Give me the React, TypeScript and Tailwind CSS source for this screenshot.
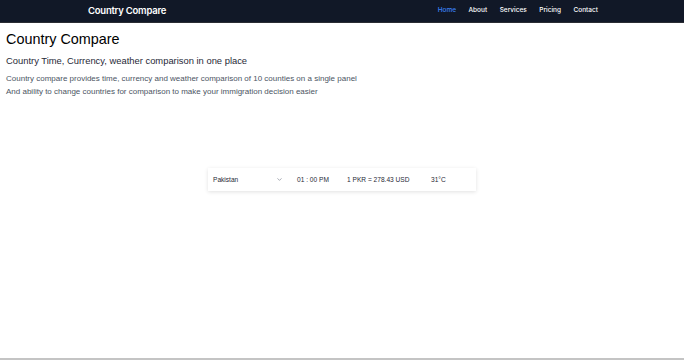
import React from 'react';

const links = ['Home', 'About', 'Services', 'Pricing', 'Contact'];

const Navbar: React.FC = () => (
  <nav className="h-[23px] bg-[#111827] border-b border-[#2a2d33] flex items-center font-['Inter',sans-serif]">
    <div className="w-full flex items-center justify-between pl-[88px] pr-[86px]">
      <span className="text-white text-[9.5px] font-semibold tracking-tight">Country Compare</span>
      <ul className="flex items-center gap-[12.5px] text-[6.5px] font-medium">
        {links.map((l, i) => (
          <li key={l} className={i === 0 ? 'text-[#3b82f6]' : 'text-white'}>
            {l}
          </li>
        ))}
      </ul>
    </div>
  </nav>
);

const CompareRow: React.FC = () => (
  <div className="mx-auto w-[268px] h-[23px] bg-white shadow-[0_1px_4px_rgba(0,0,0,0.12)] flex items-center text-[6.6px] text-[#1f2937] px-[5px]">
    <div className="w-[76px] flex items-center justify-between pr-[6px]">
      <span>Pakistan</span>
      <svg viewBox="0 0 24 24" className="w-[7px] h-[7px] text-gray-500" fill="none" stroke="currentColor" strokeWidth={2}>
        <path d="m6 9 6 6 6-6" strokeLinecap="round" strokeLinejoin="round" />
      </svg>
    </div>
    <span className="ml-[8px] w-[50px]">01 : 00 PM</span>
    <span className="w-[84px]">1 PKR = 278.43 USD</span>
    <span>31°C</span>
  </div>
);

export default function App() {
  return (
    <div className="w-[684px] h-[360px] overflow-hidden bg-white flex flex-col border-b-2 border-[#c4c4c4] font-['Liberation_Sans',Arial,sans-serif]">
      <Navbar />
      <main className="flex-1 px-[6px]">
        <h1 className="mt-[7px] text-[14.4px] leading-[18px] text-black">Country Compare</h1>
        <h2 className="mt-[6px] text-[9.4px] leading-[13px] text-[#1f2937]">Country Time, Currency, weather comparison in one place</h2>
        <p className="mt-[5px] text-[8px] leading-[13px] text-[#4b5563]">
          Country compare provides time, currency and weather comparison of 10 counties on a single panel
          <br />
          And ability to change countries for comparison to make your immigration decision easier
        </p>
        <div className="mt-[70px]">
          <CompareRow />
        </div>
      </main>
    </div>
  );
}
